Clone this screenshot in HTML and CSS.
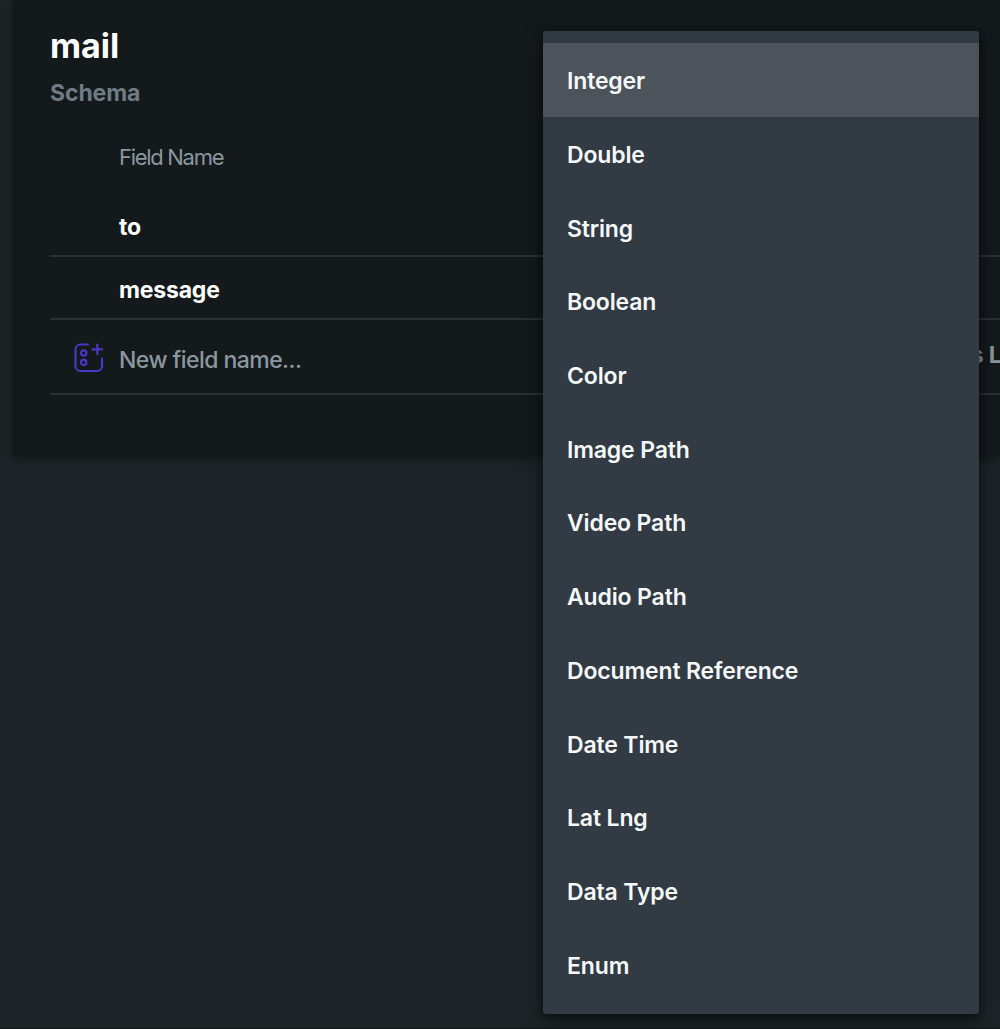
FILE: index.html
```
<!DOCTYPE html>
<html lang="en">
<head>
    <meta charset="UTF-8">
    <meta name="viewport" content="width=device-width, initial-scale=1.0">
    <title>mail - Schema</title>
    <link rel="stylesheet" href="styles.css">
</head>
<body>
    <main class="panel">
        <h1 class="collection-name">mail</h1>
        <h2 class="subtitle">Schema</h2>

        <div class="fields">
            <div class="field-header">Field Name</div>
            <div class="field-row">to</div>
            <div class="field-row">message</div>
            <div class="field-row new-field">
                <svg class="add-icon" viewBox="0 0 30 30" fill="none" stroke="currentColor" stroke-width="2.2" stroke-linecap="round" stroke-linejoin="round">
                    <path d="M14 1.5H6.5a5 5 0 0 0-5 5v16.5a5 5 0 0 0 5 5h16.5a5 5 0 0 0 5-5v-7.5"/>
                    <path d="M23.3 1.5v9.6M18.5 6.3h9.6"/>
                    <circle cx="9.7" cy="10" r="2.7"/>
                    <circle cx="9.7" cy="19.4" r="2.7"/>
                </svg>
                <span class="placeholder">New field name...</span>
                <span class="is-list">Is List</span>
            </div>
        </div>
    </main>

    <ul class="type-menu">
        <li class="active">Integer</li>
        <li>Double</li>
        <li>String</li>
        <li>Boolean</li>
        <li>Color</li>
        <li>Image Path</li>
        <li>Video Path</li>
        <li>Audio Path</li>
        <li>Document Reference</li>
        <li>Date Time</li>
        <li>Lat Lng</li>
        <li>Data Type</li>
        <li>Enum</li>
    </ul>
</body>
</html>
```

FILE: styles.css
```
* {
    margin: 0;
    padding: 0;
    box-sizing: border-box;
}

body {
    height: 1029px;
    background-color: #1d2427;
    border-bottom: 1px solid #0f1416;
    color: white;
    font-family: Inter, "Liberation Sans", sans-serif;
    overflow: hidden;
    position: relative;
}

.panel {
    height: 456px;
    margin-left: 12px;
    padding: 25px 0 0 38px;
    background-color: #14191c;
    border-radius: 0 0 0 3px;
    box-shadow: 0 3px 10px rgba(0, 0, 0, 0.35);
}

.collection-name {
    font-size: 34px;
    font-weight: 700;
    line-height: 42px;
    letter-spacing: 0;
}

.subtitle {
    margin-top: 12px;
    color: #707c84;
    font-size: 23px;
    font-weight: 700;
    line-height: 28px;
    letter-spacing: -0.1px;
}

.fields {
    margin-top: 29px;
}

.field-header {
    height: 58px;
    padding-left: 69px;
    color: #8b979f;
    font-size: 22px;
    line-height: 43px;
    letter-spacing: -1.3px;
}

.field-row {
    display: flex;
    align-items: center;
    height: 63px;
    padding: 5px 0 0 69px;
    border-bottom: 2px solid #2b3033;
    font-size: 23px;
    font-weight: 700;
    letter-spacing: -0.2px;
}

.new-field {
    height: 75px;
    padding: 6px 0 0 24px;
    color: #8b979f;
    font-weight: 500;
    letter-spacing: -0.55px;
}

.add-icon {
    width: 30px;
    height: 30px;
    margin: -4px 15px 0 0;
    color: #4a37c6;
}

.is-list {
    margin: -9px -29px 0 auto;
    font-size: 23px;
    font-weight: 700;
    letter-spacing: -0.1px;
}

.type-menu {
    position: absolute;
    top: 31px;
    left: 543px;
    width: 436px;
    height: 983px;
    padding: 12px 0;
    background-color: #323b43;
    border-radius: 3px;
    box-shadow: 0 6px 20px rgba(0, 0, 0, 0.5), 0 2px 6px rgba(0, 0, 0, 0.35);
    list-style: none;
}

.type-menu li {
    display: flex;
    align-items: center;
    height: 73.7px;
    padding: 3px 24px 0;
    color: #f5f8fa;
    font-size: 23px;
    font-weight: 600;
    letter-spacing: -0.15px;
}

.type-menu .active {
    background-color: #4c535a;
}
```
